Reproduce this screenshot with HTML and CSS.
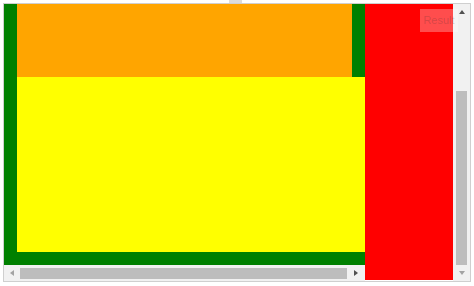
FILE: index.html
```html
<!DOCTYPE html>
<html>
<head>
<meta charset="utf-8">
<link rel="stylesheet" href="styles.css">
</head>
<body>
<div class="tab"></div>
<div class="frame">
  <div class="left">
    <div class="viewport">
      <div class="orange"></div>
      <div class="yellow"></div>
    </div>
    <div class="hscroll">
      <div class="hbtn hbtn-left"><span class="tri tri-left"></span></div>
      <div class="hthumb"></div>
      <div class="hbtn hbtn-right"><span class="tri tri-right"></span></div>
    </div>
  </div>
  <div class="red"></div>
  <div class="vscroll">
    <div class="vbtn"><span class="tri tri-up"></span></div>
    <div class="vthumb"></div>
    <div class="vbtn"><span class="tri tri-down"></span></div>
  </div>
  <div class="label">Result</div>
</div>
</body>
</html>
```

FILE: styles.css
```css
html, body {
  margin: 0;
  padding: 0;
}
body {
  width: 474px;
  height: 286px;
  background: #ffffff;
  font-family: "Liberation Sans", Arial, sans-serif;
  overflow: hidden;
}
.tab {
  width: 13px;
  height: 3px;
  margin-left: 229px;
  background: #dcdcdc;
}
.frame {
  position: relative;
  margin-left: 3px;
  width: 466px;
  height: 277px;
  border: 1px solid #cfcfcf;
  display: flex;
}
.left {
  width: 361px;
  display: flex;
  flex-direction: column;
}
.viewport {
  height: 261px;
  box-sizing: border-box;
  padding-left: 13px;
  background: #008000;
  overflow: hidden;
}
.orange {
  width: 335px;
  height: 73px;
  background: #ffa500;
}
.yellow {
  width: 400px;
  height: 175px;
  background: #ffff00;
}
.hscroll {
  height: 16px;
  background: #f1f1f1;
  display: flex;
}
.hbtn {
  display: flex;
  align-items: center;
  justify-content: center;
}
.hbtn-left {
  width: 16px;
}
.hbtn-right {
  width: 18px;
}
.hthumb {
  width: 327px;
  height: 11px;
  margin-top: 3px;
  background: #bdbdbd;
}
.red {
  width: 88px;
  height: 276px;
  background: #ff0000;
}
.vscroll {
  width: 17px;
  background: #f1f1f1;
  display: flex;
  flex-direction: column;
}
.vbtn {
  height: 16px;
  display: flex;
  align-items: center;
  justify-content: center;
}
.vthumb {
  width: 11px;
  height: 174px;
  margin-top: 71px;
  margin-left: 3px;
  background: #bdbdbd;
}
.tri {
  width: 0;
  height: 0;
  display: block;
}
.tri-up {
  border-left: 3px solid transparent;
  border-right: 3px solid transparent;
  border-bottom: 4px solid #505050;
}
.tri-down {
  border-left: 3px solid transparent;
  border-right: 3px solid transparent;
  border-top: 4px solid #a3a3a3;
}
.tri-left {
  border-top: 3px solid transparent;
  border-bottom: 3px solid transparent;
  border-right: 4px solid #a3a3a3;
}
.tri-right {
  border-top: 3px solid transparent;
  border-bottom: 3px solid transparent;
  border-left: 4px solid #505050;
}
.label {
  position: absolute;
  top: 5px;
  left: 416px;
  width: 38px;
  height: 23px;
  line-height: 23px;
  text-align: center;
  font-size: 11px;
  color: rgba(40, 40, 40, 0.2);
  background: rgba(255, 255, 255, 0.3);
}
```
